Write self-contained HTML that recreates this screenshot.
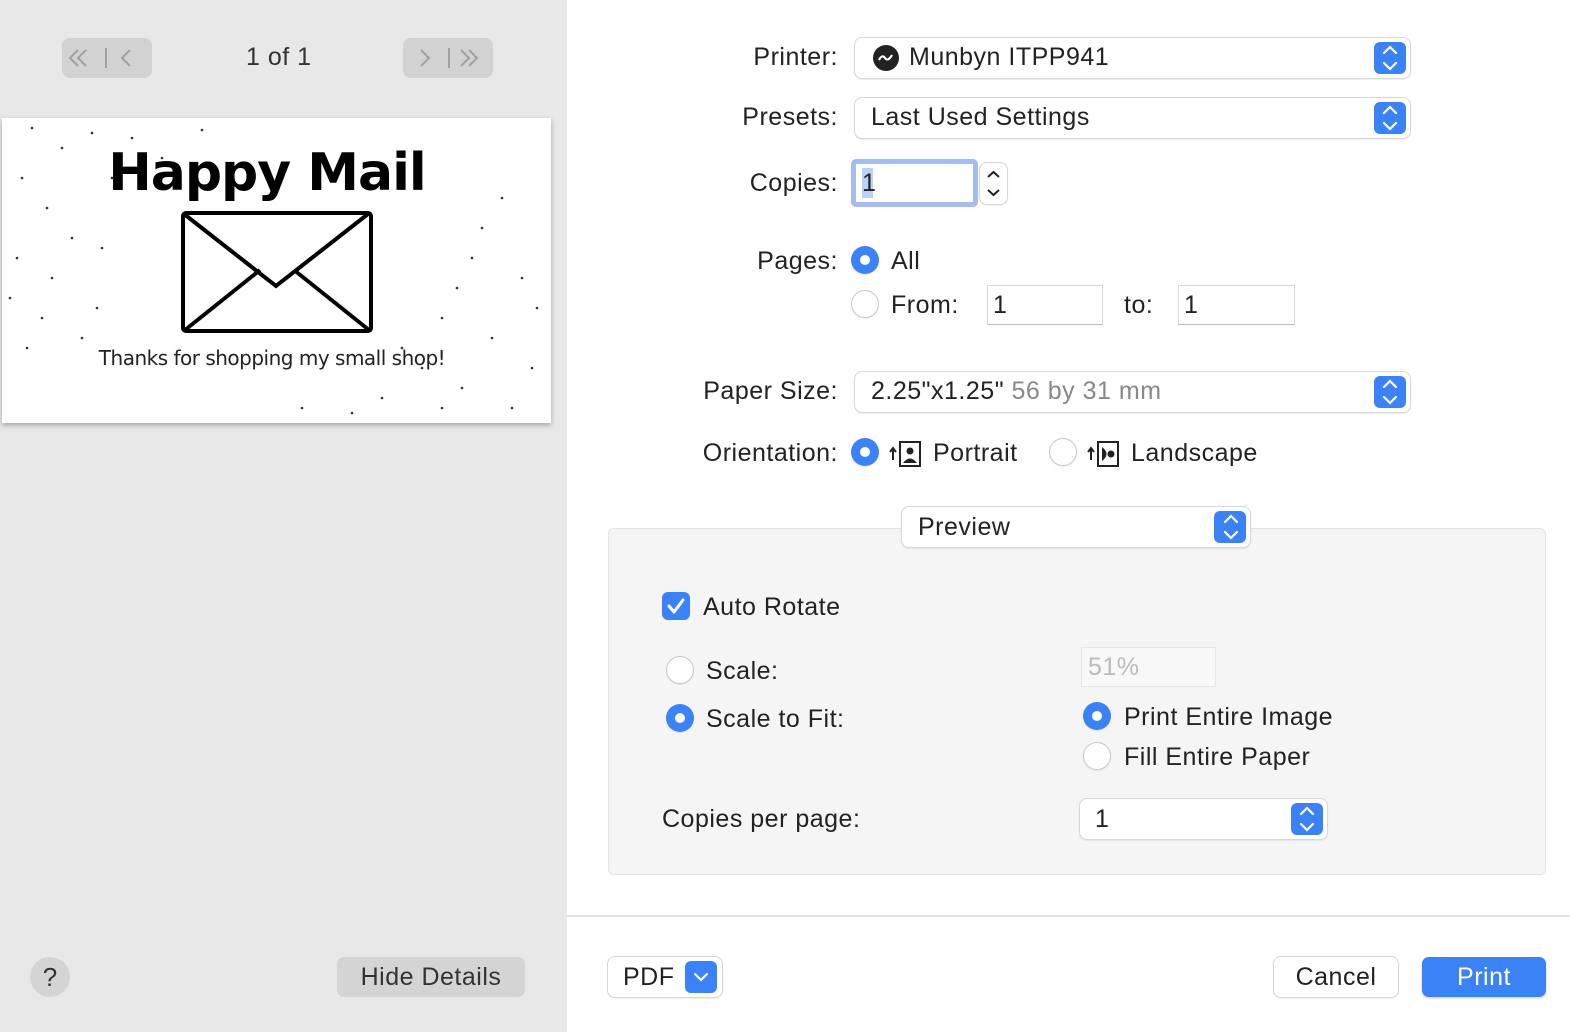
<!DOCTYPE html>
<html><head><meta charset="utf-8"><style>
*{box-sizing:border-box;margin:0;padding:0}
body{width:1570px;height:1032px;position:relative;background:#fff;font-family:"Liberation Sans",sans-serif;color:#222;overflow:hidden}
.a{position:absolute}
.t{position:absolute;font-size:25px;line-height:30px;white-space:nowrap;letter-spacing:0.5px}
.r{text-align:right}
.pop{position:absolute;background:#fff;border-radius:7px;box-shadow:0 0 0 1px #d8d8d8,0 1px 2px rgba(0,0,0,.18)}
.pop .arr{position:absolute;right:4px;top:4px;width:32px;bottom:4px;background:#3b82f6;border-radius:6px}
.radio{position:absolute;width:28px;height:28px;border-radius:50%;background:#fff;border:1px solid #c8c8c8;box-shadow:0 1px 1px rgba(0,0,0,.08)}
.radio.on{background:#3b82f6;border:none}
.radio.on::after{content:"";position:absolute;left:9px;top:9px;width:10px;height:10px;border-radius:50%;background:#fff}
.field{position:absolute;background:#fff;border:1px solid #d8d8d8;border-bottom-color:#bbb}
.btn{position:absolute;background:#fff;border-radius:7px;box-shadow:0 0 0 1px #d6d6d6,0 1px 2px rgba(0,0,0,.15);font-size:25px;text-align:center;line-height:40px;letter-spacing:0.5px}
</style></head><body>
<div class="a" style="left:0;top:0;width:567px;height:1032px;background:#e8e8e8"></div>
<div class="a" style="left:62px;top:38px;width:90px;height:40px;background:#d2d2d2;border-radius:8px"></div>
<svg class="a" style="left:62px;top:38px" width="90" height="40"><g stroke="#a0a0a0" stroke-width="2" fill="none"><path d="M16 12l-8 8 8 8M24 12l-8 8 8 8M68 12l-8 8 8 8"/><path d="M44 10v20"/></g></svg>
<div class="a" style="left:403px;top:38px;width:90px;height:40px;background:#d2d2d2;border-radius:8px"></div>
<svg class="a" style="left:403px;top:38px" width="90" height="40"><g stroke="#a0a0a0" stroke-width="2" fill="none"><path d="M18 12l8 8-8 8M58 12l8 8-8 8M66 12l8 8-8 8"/><path d="M46 10v20"/></g></svg>
<div class="t" style="left:246px;top:42px;color:#333">1 of 1</div>
<div class="a" style="left:2px;top:118px;width:549px;height:305px;background:#fff;box-shadow:0 2px 5px rgba(0,0,0,.3)">
<div class="a" style="left:0;top:20px;width:530px;text-align:center;font-size:52px;font-weight:bold;line-height:70px;color:#000;font-family:'DejaVu Sans',sans-serif;letter-spacing:-1px">Happy Mail</div>
<svg class="a" style="left:178px;top:92px" width="194" height="124"><g stroke="#000" stroke-width="4" fill="none"><rect x="3" y="3" width="188" height="118" rx="3"/><path d="M4 4l92 72 92-72M5 120l75-60M189 120l-75-60"/></g></svg>
<div class="a" style="left:0;top:228px;width:540px;text-align:center;font-size:20px;color:#222;font-family:'DejaVu Sans',sans-serif;letter-spacing:-.5px">Thanks for shopping my small shop!</div>
<svg class="a" style="left:0;top:0" width="549" height="305"><g fill="#333">
<circle cx="30" cy="10" r="1.3"/><circle cx="60" cy="30" r="1.3"/><circle cx="90" cy="15" r="1.3"/><circle cx="20" cy="60" r="1.3"/><circle cx="45" cy="90" r="1.3"/><circle cx="15" cy="140" r="1.3"/><circle cx="70" cy="120" r="1.3"/><circle cx="40" cy="200" r="1.3"/><circle cx="110" cy="60" r="1.3"/><circle cx="130" cy="20" r="1.3"/><circle cx="160" cy="40" r="1.3"/><circle cx="200" cy="12" r="1.3"/><circle cx="95" cy="190" r="1.3"/><circle cx="25" cy="230" r="1.3"/><circle cx="80" cy="220" r="1.3"/><circle cx="50" cy="160" r="1.3"/><circle cx="100" cy="130" r="1.3"/><circle cx="8" cy="180" r="1.3"/>
<circle cx="500" cy="80" r="1.3"/><circle cx="470" cy="140" r="1.3"/><circle cx="520" cy="160" r="1.3"/><circle cx="440" cy="200" r="1.3"/><circle cx="490" cy="220" r="1.3"/><circle cx="420" cy="250" r="1.3"/><circle cx="380" cy="280" r="1.3"/><circle cx="460" cy="270" r="1.3"/><circle cx="530" cy="250" r="1.3"/><circle cx="510" cy="290" r="1.3"/><circle cx="350" cy="295" r="1.3"/><circle cx="300" cy="290" r="1.3"/><circle cx="440" cy="290" r="1.3"/><circle cx="400" cy="230" r="1.3"/><circle cx="535" cy="190" r="1.3"/><circle cx="480" cy="110" r="1.3"/><circle cx="455" cy="170" r="1.3"/>
</g></svg>
</div>
<div class="a" style="left:30px;top:957px;width:40px;height:40px;border-radius:50%;background:#d4d4d4;font-size:26px;text-align:center;line-height:40px;color:#333">?</div>
<div class="a" style="left:337px;top:957px;width:188px;height:40px;border-radius:7px;background:#d4d4d4;font-size:25px;text-align:center;line-height:40px;color:#333;letter-spacing:0.5px">Hide Details</div>

<div class="t r" style="left:600px;width:238px;top:42px">Printer:</div>
<div class="pop" style="left:855px;top:38px;width:555px;height:40px"><div class="arr"></div></div>
<svg class="a" style="left:873px;top:45px" width="26" height="26"><circle cx="13" cy="13" r="13" fill="#222"/><path d="M6 15q3-6 6-2t7-3" stroke="#fff" stroke-width="2.2" fill="none"/></svg>
<div class="t" style="left:909px;top:42px">Munbyn ITPP941</div>
<div class="t r" style="left:600px;width:238px;top:102px">Presets:</div>
<div class="pop" style="left:855px;top:98px;width:555px;height:40px"><div class="arr"></div></div>
<div class="t" style="left:871px;top:102px">Last Used Settings</div>
<div class="t r" style="left:600px;width:238px;top:168px">Copies:</div>
<div class="a" style="left:851px;top:159px;width:127px;height:48px;background:#a3bdf3;border-radius:5px"></div>
<div class="a" style="left:856px;top:164px;width:117px;height:38px;background:#fff"></div>
<div class="a" style="left:862px;top:168px;width:11px;height:30px;background:#b7d2fb"></div>
<div class="t" style="left:862px;top:168px">1</div>
<div class="a" style="left:980px;top:163px;width:27px;height:41px;border-radius:7px;background:#fff;box-shadow:0 0 0 1px #d6d6d6,0 1px 2px rgba(0,0,0,.15)"></div>
<svg class="a" style="left:980px;top:163px" width="27" height="41"><g stroke="#222" stroke-width="2" fill="none"><path d="M8 14l5.5-5 5.5 5M8 27l5.5 5 5.5-5"/></g></svg>
<div class="t r" style="left:600px;width:238px;top:246px">Pages:</div>
<div class="radio on" style="left:851px;top:246px"></div>
<div class="t" style="left:891px;top:246px">All</div>
<div class="radio" style="left:851px;top:290px"></div>
<div class="t" style="left:891px;top:290px">From:</div>
<div class="field" style="left:987px;top:285px;width:116px;height:40px"></div>
<div class="t" style="left:993px;top:290px">1</div>
<div class="t" style="left:1124px;top:290px">to:</div>
<div class="field" style="left:1178px;top:285px;width:117px;height:40px"></div>
<div class="t" style="left:1184px;top:290px">1</div>
<div class="t r" style="left:600px;width:238px;top:376px">Paper Size:</div>
<div class="pop" style="left:855px;top:372px;width:555px;height:40px"><div class="arr"></div></div>
<div class="t" style="left:871px;top:376px">2.25"x1.25" <span style="color:#888">56 by 31 mm</span></div>
<div class="t r" style="left:600px;width:238px;top:438px">Orientation:</div>
<div class="radio on" style="left:851px;top:438px"></div>
<svg class="a" style="left:888px;top:440px" width="36" height="28"><path d="M5 20V9M2 12l3-4 3 4" stroke="#222" stroke-width="2" fill="none"/><rect x="12" y="2" width="20" height="24" fill="none" stroke="#222" stroke-width="2"/><circle cx="22" cy="11" r="3.5" fill="#222"/><path d="M15 23q7-9 14 0z" fill="#222"/></svg>
<div class="t" style="left:933px;top:438px">Portrait</div>
<div class="radio" style="left:1049px;top:438px"></div>
<svg class="a" style="left:1086px;top:440px" width="36" height="28"><path d="M5 20V9M2 12l3-4 3 4" stroke="#222" stroke-width="2" fill="none"/><rect x="12" y="2" width="20" height="24" fill="none" stroke="#222" stroke-width="2"/><circle cx="25" cy="14" r="3.5" fill="#222"/><path d="M16 7q9 7 0 14z" fill="#222"/></svg>
<div class="t" style="left:1131px;top:438px">Landscape</div>

<div class="a" style="left:608px;top:528px;width:938px;height:347px;background:#f5f5f5;border:1px solid #e3e3e3;border-radius:6px"></div>
<div class="pop" style="left:902px;top:507px;width:348px;height:40px"><div class="arr"></div></div>
<div class="t" style="left:918px;top:512px">Preview</div>
<div class="a" style="left:662px;top:592px;width:28px;height:28px;border-radius:6px;background:#3b82f6"></div>
<svg class="a" style="left:662px;top:592px" width="28" height="28"><path d="M7 14l5 6 9-12" stroke="#fff" stroke-width="3" fill="none" stroke-linecap="round" stroke-linejoin="round"/></svg>
<div class="t" style="left:703px;top:592px">Auto Rotate</div>
<div class="radio" style="left:666px;top:656px"></div>
<div class="t" style="left:706px;top:656px">Scale:</div>
<div class="a" style="left:1081px;top:647px;width:135px;height:40px;background:#f8f8f8;border:1px solid #e6e6e6"></div>
<div class="t" style="left:1088px;top:652px;color:#bbb">51%</div>
<div class="radio on" style="left:666px;top:704px"></div>
<div class="t" style="left:706px;top:704px">Scale to Fit:</div>
<div class="radio on" style="left:1083px;top:702px"></div>
<div class="t" style="left:1124px;top:702px">Print Entire Image</div>
<div class="radio" style="left:1083px;top:742px"></div>
<div class="t" style="left:1124px;top:742px">Fill Entire Paper</div>
<div class="t" style="left:662px;top:804px">Copies per page:</div>
<div class="pop" style="left:1080px;top:799px;width:247px;height:40px"><div class="arr"></div></div>
<div class="t" style="left:1095px;top:804px">1</div>
<div class="a" style="left:567px;top:915px;width:1003px;height:2px;background:#e2e2e2"></div>
<div class="btn" style="left:608px;top:957px;width:114px;height:40px;text-align:left;padding-left:15px">PDF</div>
<div class="a" style="left:685px;top:961px;width:32px;height:32px;border-radius:6px;background:#3b82f6"></div>
<div class="btn" style="left:1274px;top:957px;width:124px;height:40px">Cancel</div>
<div class="btn" style="left:1422px;top:957px;width:124px;height:40px;background:#3b82f6;color:#fff;box-shadow:0 1px 2px rgba(0,0,0,.2)">Print</div>
<svg class="a" style="left:0;top:0;pointer-events:none" width="1570" height="1032"><g stroke="#fff" stroke-width="2.2" fill="none" stroke-linecap="round">
<path d="M1384 53l6-6 6 6M1384 63l6 6 6-6"/><path d="M1384 113l6-6 6 6M1384 123l6 6 6-6"/><path d="M1384 387l6-6 6 6M1384 397l6 6 6-6"/><path d="M1225 522l6-6 6 6M1225 532l6 6 6-6"/><path d="M1301 814l6-6 6 6M1301 824l6 6 6-6"/><path d="M695 974l6 6 6-6"/></g></svg>
</body></html>
